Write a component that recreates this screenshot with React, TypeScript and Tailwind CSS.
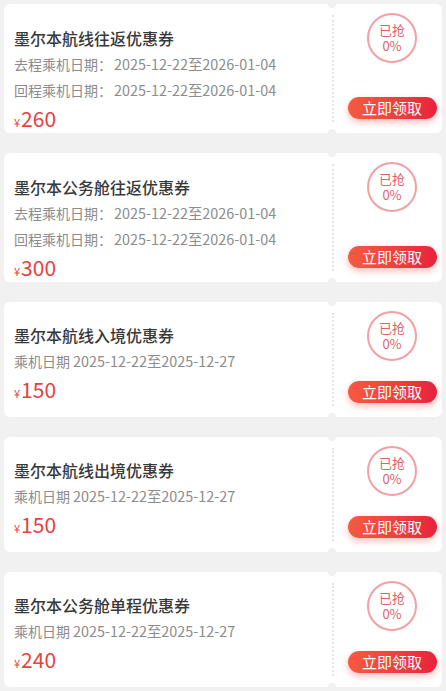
const coupons = [
  {
    title: "墨尔本航线往返优惠券",
    rows: [
      ["去程乘机日期：", "2025-12-22至2026-01-04"],
      ["回程乘机日期：", "2025-12-22至2026-01-04"],
    ],
    price: "260",
  },
  {
    title: "墨尔本公务舱往返优惠券",
    rows: [
      ["去程乘机日期：", "2025-12-22至2026-01-04"],
      ["回程乘机日期：", "2025-12-22至2026-01-04"],
    ],
    price: "300",
  },
  {
    title: "墨尔本航线入境优惠券",
    rows: [["乘机日期", "2025-12-22至2025-12-27"]],
    price: "150",
  },
  {
    title: "墨尔本航线出境优惠券",
    rows: [["乘机日期", "2025-12-22至2025-12-27"]],
    price: "150",
  },
  {
    title: "墨尔本公务舱单程优惠券",
    rows: [["乘机日期", "2025-12-22至2025-12-27"]],
    price: "240",
  },
];

function Coupon({ c }: { c: (typeof coupons)[number] }) {
  const roundTrip = c.rows.length > 1;
  return (
    <div className={roundTrip ? "relative flex h-[129px] rounded-[6px] bg-white" : "relative flex h-[115px] rounded-[6px] bg-white"}>
      {/* notches */}
      <div className="absolute -top-[4px] left-[324px] h-[8px] w-[8px] rounded-full bg-[#f1f1f1]" />
      <div className="absolute -bottom-[4px] left-[324px] h-[8px] w-[8px] rounded-full bg-[#f1f1f1]" />

      <div className={roundTrip ? "w-[328px] pl-[10px] pt-[22px]" : "w-[328px] pl-[10px] pt-[21px]"}>
        <div className="h-[24px] text-[16px] leading-[24px] font-medium text-[#383838]">{c.title}</div>
        <div className="mt-[1px]">
          {c.rows.map(([label, date]) => (
            <div key={label} className="flex h-[26px] text-[14px] leading-[26px] text-[#8c8c8c]">
              <span>{label}</span>
              <span className={roundTrip ? "ml-[2px] text-[14.4px]" : "ml-[3px] text-[14.4px]"}>{date}</span>
            </div>
          ))}
        </div>
        <div className={roundTrip ? "mt-[1px] h-[28px] leading-[28px] text-[#e8413f]" : "mt-[1px] h-[28px] leading-[28px] text-[#e8413f]"}>
          <span className="text-[11px]">¥</span>
          <span className="ml-[1px] text-[21px]">{c.price}</span>
        </div>
      </div>

      <div className="my-[11px] w-0 border-l-2 border-dotted border-[#e4e4e4]" />

      <div className="flex flex-1 flex-col items-center justify-between pl-[8px] pt-[9px] pb-[14px]">
        <div className="flex h-[50px] w-[50px] flex-col items-center justify-center rounded-full border-[2.5px] border-[#f2a0a2] text-[13px] text-[#dd6468]">
          <span className="h-[16px] leading-[16px]">已抢</span>
          <span className="h-[16px] leading-[16px]">0%</span>
        </div>
        <div className="flex h-[22px] w-[89px] items-center justify-center rounded-full bg-gradient-to-r from-[#f65a40] to-[#e8203c] text-[15px] leading-[22px] text-white shadow-[0_3px_7px_rgba(240,60,60,0.35)]">
          立即领取
        </div>
      </div>
    </div>
  );
}

export default function App() {
  return (
    <div
      className="min-h-[691px] bg-[#f1f1f1] px-[4px] pt-[4px] pb-[4px]"
      style={{ fontFamily: '"Noto Sans CJK SC", "Noto Sans", sans-serif' }}
    >
      <div className="flex flex-col gap-[20px]">
        {coupons.map((c, i) => (
          <Coupon key={i} c={c} />
        ))}
      </div>
    </div>
  );
}
